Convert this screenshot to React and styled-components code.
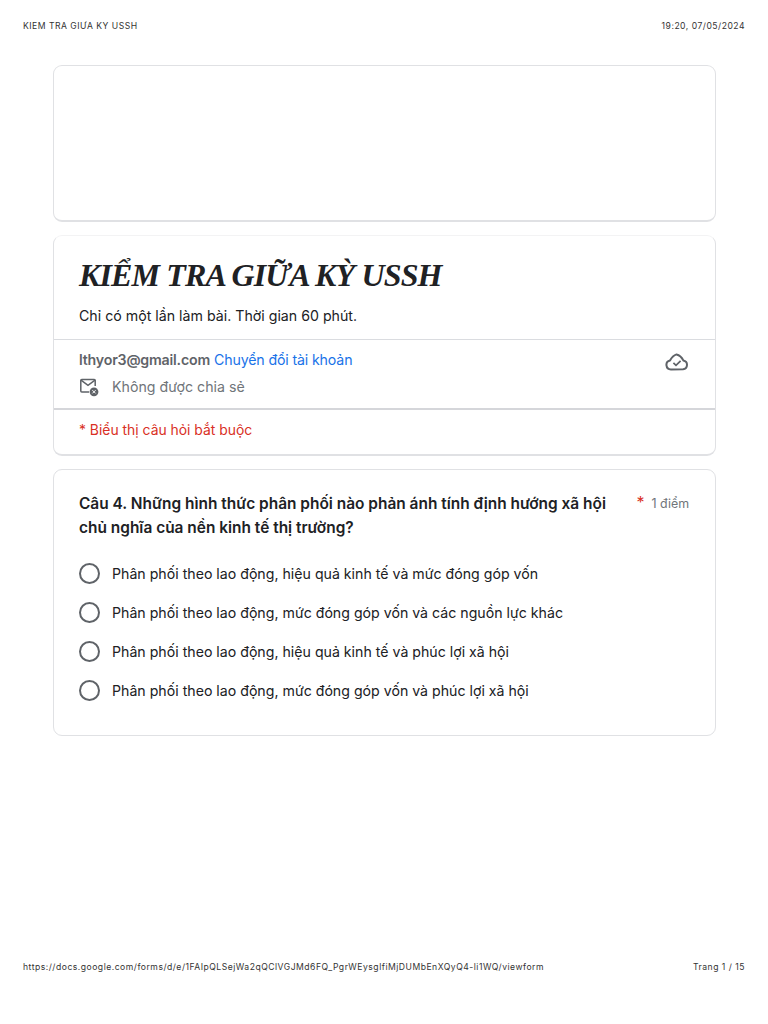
import React from "react";
import styled, { createGlobalStyle } from "styled-components";

const GlobalStyle = createGlobalStyle`
  html, body {
    margin: 0;
    padding: 0;
    background: #fff;
  }
  body {
    font-family: "Inter", "Liberation Sans", sans-serif;
  }
`;

const Page = styled.div`
  width: 768px;
  height: 1024px;
  display: flex;
  flex-direction: column;
  box-sizing: border-box;
  padding: 20px 23px 51px;
  overflow: hidden;
`;

const PrintLine = styled.div`
  display: flex;
  justify-content: space-between;
  align-items: center;
  height: 12px;
  font-size: 8.6px;
  letter-spacing: 0.5px;
  color: #333;
`;

const Sheet = styled.div`
  flex: 1;
  display: flex;
  flex-direction: column;
  gap: 13px;
  padding: 33px 29px 0 30px;
`;

const Card = styled.section`
  box-sizing: border-box;
  height: ${(p) => p.$h}px;
  background: #fff;
  border: 1px solid #e0e1e4;
  border-bottom-width: ${(p) => (p.$thick ? 2 : 1)}px;
  border-radius: 9px;
`;

const HeadCard = styled(Card)`
  display: flex;
  flex-direction: column;
  border-top-color: #f3f3f4;
`;

const Title = styled.h1`
  margin: 0;
  padding: 18px 0 0 25px;
  height: 42px;
  font-family: "Liberation Serif", serif;
  font-style: italic;
  font-weight: 700;
  font-size: 32px;
  line-height: 42px;
  letter-spacing: -0.85px;
  color: #202124;
  white-space: nowrap;
`;

const Intro = styled.p`
  margin: 0;
  padding: 10px 0 0 25px;
  height: 33px;
  font-size: 14.2px;
  line-height: 20px;
  color: #202124;
`;

const AccountRow = styled.div`
  box-sizing: border-box;
  height: 71px;
  border-top: 1px solid #dadce0;
  border-bottom: 2px solid #d5d6da;
  padding: 10px 26px 0 25px;
  display: flex;
  justify-content: space-between;
`;

const AccountInfo = styled.div`
  display: flex;
  flex-direction: column;
  gap: 7px;
`;

const AccountLine = styled.div`
  font-size: 14.2px;
  line-height: 20px;
  white-space: nowrap;
`;

const Email = styled.b`
  font-weight: 600;
  letter-spacing: -0.2px;
  color: #5f6368;
`;

const SwitchLink = styled.a`
  color: #1a73e8;
  letter-spacing: -0.15px;
  margin-left: 4px;
`;

const ShareLine = styled.div`
  display: flex;
  align-items: center;
  gap: 13px;
  font-size: 14.2px;
  line-height: 20px;
  color: #70757a;
`;

const Required = styled.div`
  padding: 10px 0 0 25px;
  font-size: 13.9px;
  line-height: 20px;
  color: #d93025;
`;

const CloudSlot = styled.div`
  padding-top: 2px;
  height: 24px;
`;

const QuestionCard = styled(Card)`
  padding: 22px 25px 0;
`;

const QuestionHead = styled.div`
  display: flex;
  justify-content: space-between;
  align-items: flex-start;
`;

const QuestionText = styled.h2`
  margin: 0;
  width: 540px;
  font-size: 15.45px;
  font-weight: 600;
  line-height: 24px;
  color: #202124;
`;

const Points = styled.div`
  display: flex;
  align-items: flex-start;
  gap: 7px;
  padding-right: 1px;
  font-size: 12.4px;
  line-height: 24px;
  color: #70757a;
  white-space: nowrap;
`;

const Star = styled.span`
  color: #d93025;
  font-size: 16px;
  line-height: 20px;
`;

const Options = styled.ul`
  list-style: none;
  margin: 14px 0 0;
  padding: 0;
  display: flex;
  flex-direction: column;
`;

const Option = styled.li`
  height: 39px;
  display: flex;
  align-items: center;
  gap: 13px;
  font-size: 14.17px;
  color: #202124;
`;

const Radio = styled.span`
  box-sizing: border-box;
  width: 21px;
  height: 21px;
  margin-right: -1px;
  flex: none;
  border: 2px solid #5f6368;
  border-radius: 50%;
`;

const MailOffIcon = () => (
  <svg width="20" height="20" viewBox="0 0 20 20" fill="none">
    <path d="M10 15H2.8a1 1 0 0 1-1-1V3.5a1 1 0 0 1 1-1h12.4a1 1 0 0 1 1 1V9" stroke="#5f6368" strokeWidth="1.5" />
    <path d="M2 3.2l7 5.2 7-5.2" stroke="#5f6368" strokeWidth="1.5" />
    <circle cx="15" cy="14.8" r="4.4" fill="#5f6368" />
    <path d="M13.4 13.2l3.2 3.2M16.6 13.2l-3.2 3.2" stroke="#fff" strokeWidth="1" />
  </svg>
);

const CloudDoneIcon = () => (
  <svg width="24" height="20" viewBox="0 0 24 20" fill="none" stroke="#5f6368" strokeWidth="2">
    <path d="M6 17.4a4.5 4.5 0 0 1-1-8.9C6.6 5.6 9 3.2 11.5 2.4c2.8.6 5.4 3 6.8 6a4.5 4.5 0 0 1-.3 8.9z" strokeLinejoin="round" />
    <path d="M8.4 10.8l2.6 2.6 4.6-4.6" strokeWidth="1.7" />
  </svg>
);

const answers = [
  "Phân phối theo lao động, hiệu quả kinh tế và mức đóng góp vốn",
  "Phân phối theo lao động, mức đóng góp vốn và các nguồn lực khác",
  "Phân phối theo lao động, hiệu quả kinh tế và phúc lợi xã hội",
  "Phân phối theo lao động, mức đóng góp vốn và phúc lợi xã hội",
];

export default function App() {
  return (
    <Page>
      <GlobalStyle />
      <PrintLine>
        <span>KIEM TRA GIƯA KY USSH</span>
        <span>19:20, 07/05/2024</span>
      </PrintLine>
      <Sheet>
        <Card $h={157} $thick />
        <HeadCard $h={221} $thick>
          <Title>KIỂM TRA GIỮA KỲ USSH</Title>
          <Intro>Chỉ có một lần làm bài. Thời gian 60 phút.</Intro>
          <AccountRow>
            <AccountInfo>
              <AccountLine>
                <Email>lthyor3@gmail.com</Email>
                <SwitchLink>Chuyển đổi tài khoản</SwitchLink>
              </AccountLine>
              <ShareLine>
                <MailOffIcon />
                Không được chia sẻ
              </ShareLine>
            </AccountInfo>
            <CloudSlot>
              <CloudDoneIcon />
            </CloudSlot>
          </AccountRow>
          <Required>* Biểu thị câu hỏi bắt buộc</Required>
        </HeadCard>
        <QuestionCard $h={267}>
          <QuestionHead>
            <QuestionText>
              Câu 4. Những hình thức phân phối nào phản ánh tính định hướng xã hội chủ nghĩa của nền kinh tế thị trường?
            </QuestionText>
            <Points>
              <Star>*</Star>1 điểm
            </Points>
          </QuestionHead>
          <Options>
            {answers.map((a) => (
              <Option key={a}>
                <Radio />
                {a}
              </Option>
            ))}
          </Options>
        </QuestionCard>
      </Sheet>
      <PrintLine>
        <span>https://docs.google.com/forms/d/e/1FAIpQLSejWa2qQClVGJMd6FQ_PgrWEysglfiMjDUMbEnXQyQ4-li1WQ/viewform</span>
        <span>Trang 1 / 15</span>
      </PrintLine>
    </Page>
  );
}
